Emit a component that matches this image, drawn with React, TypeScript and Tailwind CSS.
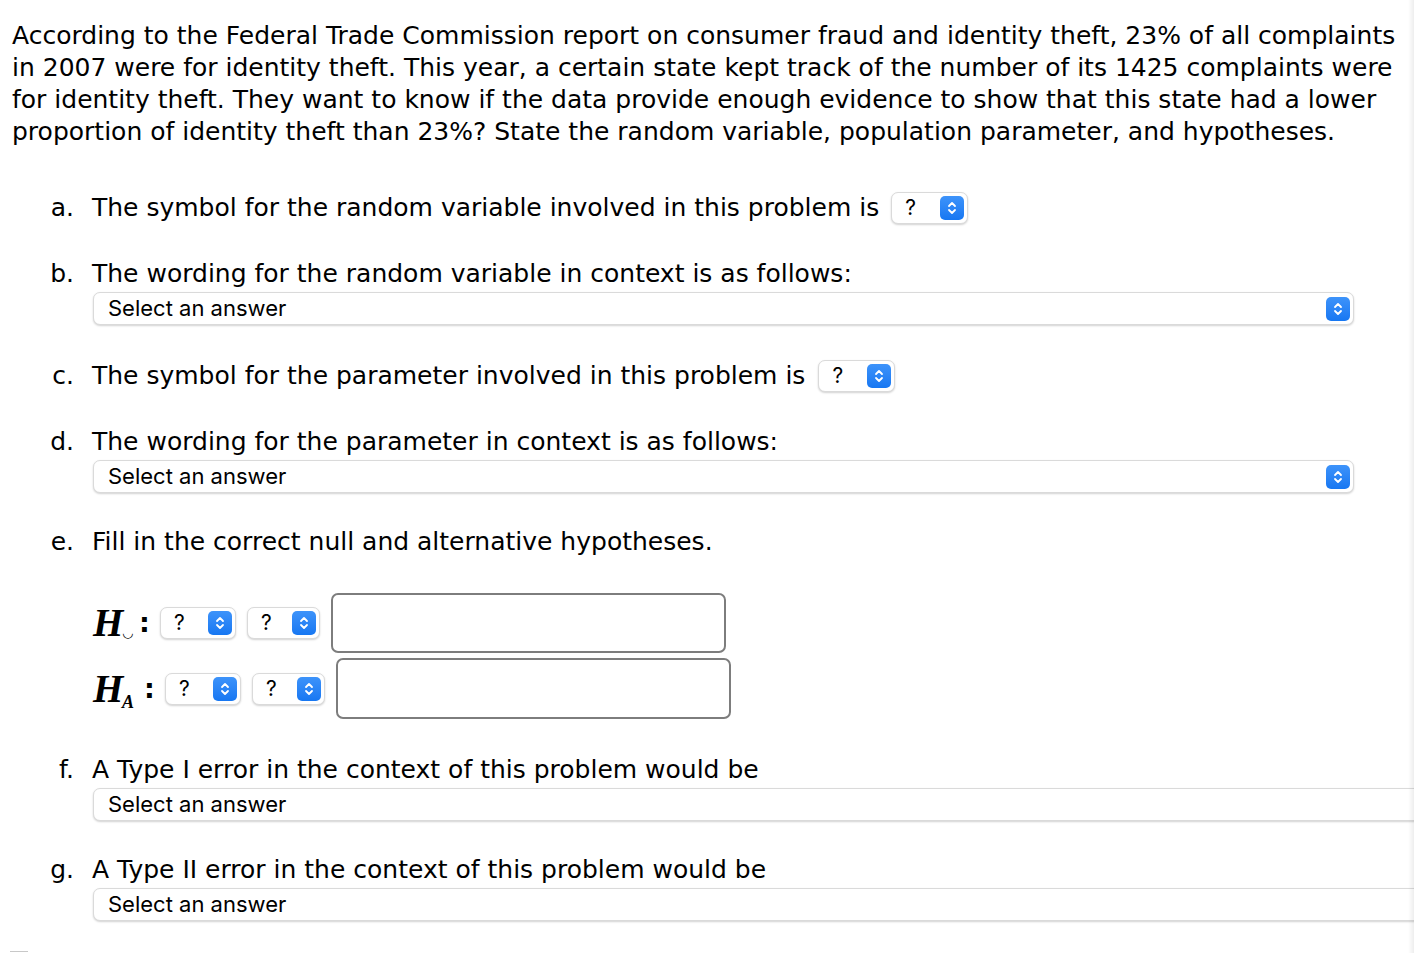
const BODY = { fontFamily: '"DejaVu Sans", Verdana, sans-serif' };

function Arrows() {
  return (
    <span className="flex h-6 w-6 shrink-0 items-center justify-center rounded-[5px] bg-gradient-to-b from-[#3d93fa] to-[#1677f2]">
      <svg width="10" height="14" viewBox="0 0 10 14" fill="none">
        <path d="M2 5 L5 2 L8 5" stroke="white" strokeWidth="1.8" strokeLinecap="round" strokeLinejoin="round" />
        <path d="M2 9 L5 12 L8 9" stroke="white" strokeWidth="1.8" strokeLinecap="round" strokeLinejoin="round" />
      </svg>
    </span>
  );
}

function MiniSelect({ w = "w-[77px]", className = "" }: { w?: string; className?: string }) {
  return (
    <span
      className={`flex h-8 shrink-0 items-center justify-between rounded-[7px] border border-[#dadada] bg-white pl-[13px] pr-[3px] font-['Inter',sans-serif] text-[21px] text-black shadow-[0_1px_2px_rgba(0,0,0,0.18)] ${w} ${className}`}
    >
      ?
      <Arrows />
    </span>
  );
}

function WideSelect({ w, arrows = true }: { w: string; arrows?: boolean }) {
  return (
    <div
      className={`ml-px mt-[2px] flex h-[33px] items-center justify-between rounded-[7px] border border-[#dadada] bg-white pl-[14px] pr-[3px] font-['Inter',sans-serif] text-[22px] text-black shadow-[0_1px_2px_rgba(0,0,0,0.18)] ${w}`}
    >
      <span>Select an answer</span>
      {arrows && <Arrows />}
    </div>
  );
}

function Item({ mark, children, className = "" }: { mark: string; children: React.ReactNode; className?: string }) {
  return (
    <li className={`flex ${className}`}>
      <span className="w-[62px] shrink-0 text-right leading-8">{mark}</span>
      <div className="ml-[18px] flex-1">{children}</div>
    </li>
  );
}

function Hyp({ sub, alt }: { sub: React.ReactNode; alt?: boolean }) {
  return (
    <div className={`flex items-center ${alt ? "h-[61px]" : "h-[60px]"}`}>
      <span className={`relative h-8 shrink-0 font-['Liberation_Serif',serif] italic font-bold text-black ${alt ? "w-[51px]" : "w-[46px]"}`}>
        <span className="text-[39px] leading-8">H</span>
        {sub}
      </span>
      <span className="w-[21px] shrink-0 text-[27px] font-bold leading-8">:</span>
      <MiniSelect w="w-[76px]" />
      <MiniSelect w="w-[73px]" className="ml-[11px]" />
      <div className={`ml-[11px] w-[395px] rounded-[7px] border-2 border-[#7d7d7d] bg-white ${alt ? "h-[61px]" : "h-[60px]"}`} />
    </div>
  );
}

export default function App() {
  return (
    <div className="relative h-[953px] w-[1414px] overflow-hidden bg-white px-[12px] pt-[20px] text-[25px] text-black" style={BODY}>
      <p className="leading-8">
        According to the Federal Trade Commission report on consumer fraud and identity theft, 23% of all complaints in 2007 were for identity theft. This year, a certain state kept track of the number of its 1425 complaints were for identity theft. They want to know if the data provide enough evidence to show that this state had a lower proportion of identity theft than 23%? State the random variable, population parameter, and hypotheses.
      </p>

      <ol className="mt-[44px]">
        <Item mark="a.">
          <div className="flex h-8 items-center">
            <span className="leading-8">The symbol for the random variable involved in this problem is</span>
            <MiniSelect className="ml-[12px]" />
          </div>
        </Item>

        <Item mark="b." className="mt-[34px]">
          <div className="leading-8">The wording for the random variable in context is as follows:</div>
          <WideSelect w="w-[1261px]" />
        </Item>

        <Item mark="c." className="mt-[35px]">
          <div className="flex h-8 items-center">
            <span className="leading-8">The symbol for the parameter involved in this problem is</span>
            <MiniSelect className="ml-[13px]" />
          </div>
        </Item>

        <Item mark="d." className="mt-[34px]">
          <div className="leading-8">The wording for the parameter in context is as follows:</div>
          <WideSelect w="w-[1261px]" />
        </Item>

        <Item mark="e." className="mt-[33px]">
          <div className="leading-8">Fill in the correct null and alternative hypotheses.</div>
          <div className="mt-[35px] flex flex-col gap-[5px] pl-px">
            <Hyp sub={<span className="absolute left-[29px] top-[19px] font-['DejaVu_Sans',sans-serif] text-[13px] not-italic font-normal leading-none">◡</span>} />
            <Hyp alt sub={<span className="absolute left-[29px] top-[20px] text-[18px] leading-none">A</span>} />
          </div>
        </Item>

        <Item mark="f." className="mt-[35px]">
          <div className="leading-8">A Type I error in the context of this problem would be</div>
          <WideSelect arrows={false} w="w-[1360px]" />
        </Item>

        <Item mark="g." className="mt-[33px]">
          <div className="leading-8">A Type II error in the context of this problem would be</div>
          <WideSelect arrows={false} w="w-[1360px]" />
        </Item>
      </ol>

      <div className="ml-[-2px] mt-[30px] h-3 w-[18px] border-t border-[#c8c8c8]" />

      <div className="absolute right-0 top-0 h-full w-[6px] bg-gradient-to-r from-transparent to-black/[0.07]" />
    </div>
  );
}
